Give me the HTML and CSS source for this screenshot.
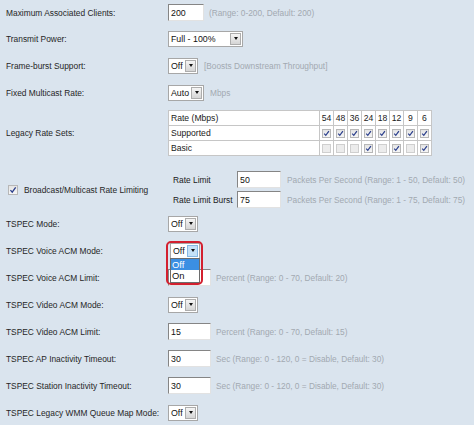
FILE: index.html
```html
<!DOCTYPE html>
<html>
<head>
<meta charset="utf-8">
<link rel="stylesheet" href="styles.css">
</head>
<body>
<div class="form">
  <div class="row first">
    <div class="label">Maximum Associated Clients:</div>
    <div class="ctl"><input class="input w36" type="text" value="200"><span class="hint">(Range: 0-200, Default: 200)</span></div>
  </div>
  <div class="row">
    <div class="label">Transmit Power:</div>
    <div class="ctl"><div class="select w75"><span>Full - 100%</span><span class="btn"><i class="tri"></i></span></div></div>
  </div>
  <div class="row">
    <div class="label">Frame-burst Support:</div>
    <div class="ctl gap6"><div class="select w30"><span>Off</span><span class="btn"><i class="tri"></i></span></div><span class="hint">[Boosts Downstream Throughput]</span></div>
  </div>
  <div class="row">
    <div class="label">Fixed Multicast Rate:</div>
    <div class="ctl gap6"><div class="select w36"><span>Auto</span><span class="btn"><i class="tri"></i></span></div><span class="hint">Mbps</span></div>
  </div>
  <div class="row rates">
    <div class="label">Legacy Rate Sets:</div>
    <table class="rate-table">
      <colgroup><col class="c-name"><col class="c-r"><col class="c-r"><col class="c-r"><col class="c-r"><col class="c-r"><col class="c-r"><col class="c-r"><col class="c-r"></colgroup>
      <tr><td class="name">Rate (Mbps)</td><td>54</td><td>48</td><td>36</td><td>24</td><td>18</td><td>12</td><td>9</td><td>6</td></tr>
      <tr><td class="name">Supported</td>
        <td><span class="cb on"><svg viewBox="0 0 9 9"><path d="M2.2 4.6 L3.8 6.4 L6.9 2.2"/></svg></span></td>
        <td><span class="cb on"><svg viewBox="0 0 9 9"><path d="M2.2 4.6 L3.8 6.4 L6.9 2.2"/></svg></span></td>
        <td><span class="cb on"><svg viewBox="0 0 9 9"><path d="M2.2 4.6 L3.8 6.4 L6.9 2.2"/></svg></span></td>
        <td><span class="cb on"><svg viewBox="0 0 9 9"><path d="M2.2 4.6 L3.8 6.4 L6.9 2.2"/></svg></span></td>
        <td><span class="cb on"><svg viewBox="0 0 9 9"><path d="M2.2 4.6 L3.8 6.4 L6.9 2.2"/></svg></span></td>
        <td><span class="cb on"><svg viewBox="0 0 9 9"><path d="M2.2 4.6 L3.8 6.4 L6.9 2.2"/></svg></span></td>
        <td><span class="cb on"><svg viewBox="0 0 9 9"><path d="M2.2 4.6 L3.8 6.4 L6.9 2.2"/></svg></span></td>
        <td><span class="cb on"><svg viewBox="0 0 9 9"><path d="M2.2 4.6 L3.8 6.4 L6.9 2.2"/></svg></span></td>
      </tr>
      <tr><td class="name">Basic</td>
        <td><span class="cb off"></span></td>
        <td><span class="cb off"></span></td>
        <td><span class="cb off"></span></td>
        <td><span class="cb on"><svg viewBox="0 0 9 9"><path d="M2.2 4.6 L3.8 6.4 L6.9 2.2"/></svg></span></td>
        <td><span class="cb off"></span></td>
        <td><span class="cb on"><svg viewBox="0 0 9 9"><path d="M2.2 4.6 L3.8 6.4 L6.9 2.2"/></svg></span></td>
        <td><span class="cb off"></span></td>
        <td><span class="cb on"><svg viewBox="0 0 9 9"><path d="M2.2 4.6 L3.8 6.4 L6.9 2.2"/></svg></span></td>
      </tr>
    </table>
  </div>
  <div class="row rl">
    <div class="label check-label"><span class="cb big on"><svg viewBox="0 0 9 9"><path d="M2.2 4.6 L3.8 6.4 L6.9 2.2"/></svg></span><span>Broadcast/Multicast Rate Limiting</span></div>
    <div class="rl-grid">
      <span>Rate Limit</span><input class="input w44" type="text" value="50"><span class="hint">Packets Per Second (Range: 1 - 50, Default: 50)</span>
      <span>Rate Limit Burst</span><input class="input w44" type="text" value="75"><span class="hint">Packets Per Second (Range: 1 - 75, Default: 75)</span>
    </div>
  </div>
  <div class="row">
    <div class="label">TSPEC Mode:</div>
    <div class="ctl"><div class="select w30"><span>Off</span><span class="btn"><i class="tri"></i></span></div></div>
  </div>
  <div class="row">
    <div class="label">TSPEC Voice ACM Mode:</div>
    <div class="ctl">
      <div class="select w30 open"><span>Off</span><span class="btn"><i class="tri"></i></span>
        <div class="dropdown"><div class="opt sel">Off</div><div class="opt">On</div></div>
        <div class="highlight"></div>
      </div>
    </div>
  </div>
  <div class="row">
    <div class="label">TSPEC Voice ACM Limit:</div>
    <div class="ctl"><input class="input w43" type="text" value=""><span class="hint">Percent (Range: 0 - 70, Default: 20)</span></div>
  </div>
  <div class="row">
    <div class="label">TSPEC Video ACM Mode:</div>
    <div class="ctl"><div class="select w30"><span>Off</span><span class="btn"><i class="tri"></i></span></div></div>
  </div>
  <div class="row">
    <div class="label">TSPEC Video ACM Limit:</div>
    <div class="ctl"><input class="input w43" type="text" value="15"><span class="hint">Percent (Range: 0 - 70, Default: 15)</span></div>
  </div>
  <div class="row">
    <div class="label">TSPEC AP Inactivity Timeout:</div>
    <div class="ctl"><input class="input w43" type="text" value="30"><span class="hint">Sec (Range: 0 - 120, 0 = Disable, Default: 30)</span></div>
  </div>
  <div class="row">
    <div class="label">TSPEC Station Inactivity Timeout:</div>
    <div class="ctl"><input class="input w43" type="text" value="30"><span class="hint">Sec (Range: 0 - 120, 0 = Disable, Default: 30)</span></div>
  </div>
  <div class="row">
    <div class="label">TSPEC Legacy WMM Queue Map Mode:</div>
    <div class="ctl"><div class="select w30"><span>Off</span><span class="btn"><i class="tri"></i></span></div></div>
  </div>
</div>
</body>
</html>
```
FILE: styles.css
```css
html, body {
  margin: 0;
  background: #dae4ee;
}
body {
  font-family: "Liberation Sans", Arial, sans-serif;
  font-size: 8.4px;
  color: #262626;
  overflow: hidden;
}
.form {
  padding-left: 6px;
}
.row {
  display: flex;
  align-items: center;
  height: 27px;
}
.row.first {
  height: 25px;
}
.label {
  width: 162px;
  flex: none;
  white-space: nowrap;
}
.ctl {
  display: flex;
  align-items: center;
  gap: 5px;
}
.ctl.gap6 {
  gap: 6px;
}
.hint {
  color: #a2a9b1;
  white-space: nowrap;
  font-size: 8.3px;
}
.input {
  box-sizing: border-box;
  height: 17px;
  margin: 0;
  padding: 0 2px;
  border: 1px solid;
  border-color: #858585 #e2e2e2 #e2e2e2 #858585;
  background: #fff;
  font-family: "Liberation Sans", Arial, sans-serif;
  font-size: 8.8px;
  color: #111;
  outline: none;
}
.w36 { width: 36px; }
.w43 { width: 43px; }
.w44 { width: 44px; }
.w30 { width: 30px; }
.w75 { width: 75px; }

.select {
  position: relative;
  box-sizing: border-box;
  height: 16px;
  border: 1px solid #a7a7a7;
  background: #fff;
  display: flex;
  align-items: center;
  justify-content: space-between;
  padding-left: 2px;
  font-size: 8.8px;
  color: #111;
}
.select .btn {
  box-sizing: border-box;
  width: 11px;
  height: 12px;
  margin-right: 1px;
  border: 1px solid #adadad;
  background: linear-gradient(#f5f5f5, #d5d5d5);
  display: flex;
  align-items: center;
  justify-content: center;
}
.tri {
  width: 0;
  height: 0;
  border-left: 2.5px solid transparent;
  border-right: 2.5px solid transparent;
  border-top: 3px solid #111;
}
.select.open {
  margin-left: 2px;
}
.select.open .btn {
  background: #c4e1f7;
  border-color: #86b8e4;
}
.dropdown {
  position: absolute;
  left: -1px;
  top: 14px;
  width: 30px;
  box-sizing: border-box;
  border: 1px solid #6d6d6d;
  background: #fff;
  z-index: 2;
  font-size: 9.4px;
}
.opt {
  height: 11.5px;
  line-height: 11.5px;
  padding-left: 1px;
  color: #111;
}
.opt.sel {
  background: #3b8fe3;
  color: #fff;
}
.highlight {
  position: absolute;
  left: -5px;
  top: -3px;
  width: 37px;
  height: 44px;
  box-sizing: border-box;
  border: 2px solid #d3202f;
  border-radius: 5px;
  z-index: 3;
}

/* rate table */
.row.rates {
  height: auto;
  padding-top: 4px;
}
.rate-table {
  border-collapse: collapse;
  table-layout: fixed;
  width: 263px;
  background: #fff;
  border: 1px solid #8f8f8f;
  font-size: 8.6px;
  color: #1a1a1a;
}
.c-name { width: 151px; }
.c-r { width: 14px; }
.rate-table tr {
  height: 15px;
}
.rate-table td {
  border: 1px solid #c6c6c6;
  padding: 0;
  text-align: center;
  vertical-align: middle;
  line-height: 12px;
}
.rate-table td.name {
  text-align: left;
  padding-left: 2px;
}
.cb {
  display: inline-block;
  box-sizing: border-box;
  width: 9px;
  height: 9px;
  border: 1px solid #b7b7b7;
  background: linear-gradient(#e4e4e4, #f6f6f6);
  vertical-align: middle;
  position: relative;
}
.cb svg {
  position: absolute;
  left: -1px;
  top: -1px;
  width: 9px;
  height: 9px;
}
.cb svg path {
  fill: none;
  stroke: #2b3f8c;
  stroke-width: 1.2;
}
.cb.off {
  border-color: #cfcfcf;
  background: #ececec;
}
.cb.big {
  width: 10px;
  height: 10px;
}
.cb.big svg {
  width: 10px;
  height: 10px;
}

/* rate limiting */
.row.rl {
  height: 54px;
  box-sizing: border-box;
  padding-top: 14px;
  padding-bottom: 1px;
}
.check-label {
  display: flex;
  align-items: center;
  gap: 6px;
  padding-left: 2px;
  box-sizing: border-box;
}
.rl-grid {
  display: grid;
  grid-template-columns: 64px 44px auto;
  row-gap: 3px;
  align-items: center;
  padding-left: 5px;
  color: #1a1a1a;
}
.rl-grid .hint {
  margin-left: 6px;
}
```
